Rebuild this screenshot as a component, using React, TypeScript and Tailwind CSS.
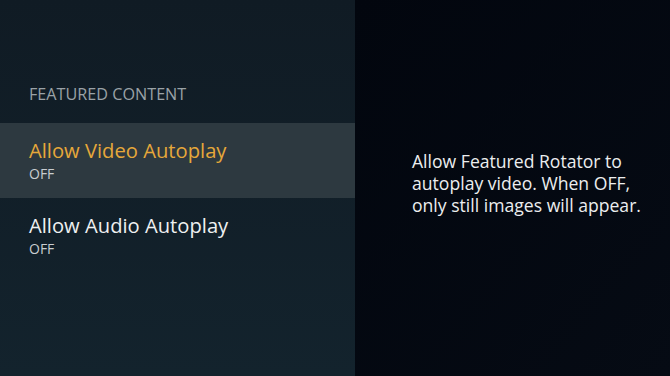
const font = { fontFamily: '"Open Sans", "Noto Sans", sans-serif' };

interface Setting {
  title: string;
  value: string;
}

const settings: Setting[] = [
  { title: 'Allow Video Autoplay', value: 'OFF' },
  { title: 'Allow Audio Autoplay', value: 'OFF' },
];

export default function App() {
  const selected = 0;

  return (
    <div className="flex h-[376px] w-[670px] overflow-hidden" style={font}>
      {/* Menu */}
      <div className="flex w-[355px] flex-col bg-gradient-to-b from-[#101b24] to-[#13232d] pt-[84px]">
        <h2 className="px-[29px] text-[16.2px] leading-5 text-[#9aa2a7]">FEATURED CONTENT</h2>
        <div className="mt-[19px] flex flex-col">
          {settings.map((s, i) => (
            <div
              key={s.title}
              className={`flex h-[75px] flex-col px-[29px] pt-[15px] ${
                i === selected ? 'bg-[#2d3940]' : ''
              }`}
            >
              <span
                className={`text-[20.2px] leading-6 ${
                  i === selected ? 'text-[#e6a83a]' : 'text-[#eef0f1]'
                }`}
              >
                {s.title}
              </span>
              <span className="mt-[4px] text-[14px] leading-4 text-[#c8cdd0]">{s.value}</span>
            </div>
          ))}
        </div>
      </div>

      {/* Description */}
      <div className="flex flex-1 items-start bg-gradient-to-br from-[#02060e] to-[#060b14] pl-[57px] pt-[150px]">
        <p className="text-[17.6px] leading-[22px] text-[#eceeef]">
          Allow Featured Rotator to
          <br />
          autoplay video. When OFF,
          <br />
          only still images will appear.
        </p>
      </div>
    </div>
  );
}
